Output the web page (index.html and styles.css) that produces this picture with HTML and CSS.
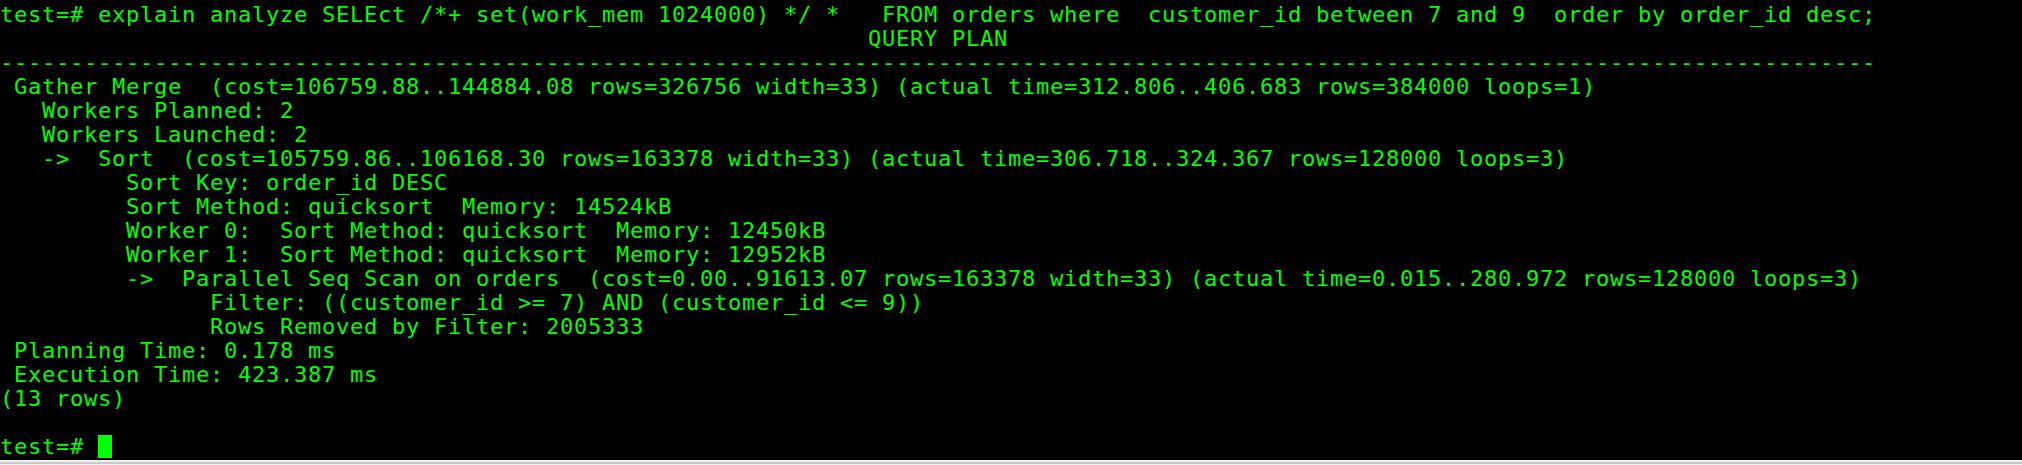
FILE: index.html
```html
<!DOCTYPE html>
<html>
<head>
<meta charset="utf-8">
<link rel="stylesheet" href="styles.css">
</head>
<body>
<div class="screen">
<div class="term"><pre class="out">test=# explain analyze SELEct /*+ set(work_mem 1024000) */ *   FROM orders where  customer_id between 7 and 9  order by order_id desc;
                                                              QUERY PLAN
--------------------------------------------------------------------------------------------------------------------------------------
 Gather Merge  (cost=106759.88..144884.08 rows=326756 width=33) (actual time=312.806..406.683 rows=384000 loops=1)
   Workers Planned: 2
   Workers Launched: 2
   -&gt;  Sort  (cost=105759.86..106168.30 rows=163378 width=33) (actual time=306.718..324.367 rows=128000 loops=3)
         Sort Key: order_id DESC
         Sort Method: quicksort  Memory: 14524kB
         Worker 0:  Sort Method: quicksort  Memory: 12450kB
         Worker 1:  Sort Method: quicksort  Memory: 12952kB
         -&gt;  Parallel Seq Scan on orders  (cost=0.00..91613.07 rows=163378 width=33) (actual time=0.015..280.972 rows=128000 loops=3)
               Filter: ((customer_id &gt;= 7) AND (customer_id &lt;= 9))
               Rows Removed by Filter: 2005333
 Planning Time: 0.178 ms
 Execution Time: 423.387 ms
(13 rows)

test=# <span class="cursor"> </span></pre></div>
<div class="statusbar"><div class="sb-line"></div></div>
</div>
</body>
</html>
```
FILE: styles.css
```css
html, body {
  margin: 0;
  padding: 0;
  background: #000;
}
.screen {
  width: 2022px;
  height: 465px;
  display: flex;
  flex-direction: column;
  background: #000;
  overflow: hidden;
}
.term {
  flex: 1;
  padding-top: 3px;
  background: #000;
}
.out {
  margin: 0;
  font-family: "DejaVu Sans Mono", monospace;
  font-size: 22px;
  letter-spacing: 0.755px;
  line-height: 24px;
  color: #00ff00;
  white-space: pre;
}
.cursor {
  display: inline-block;
  width: 14px;
  height: 23px;
  vertical-align: top;
  margin-top: 0;
  background: #00ff00;
  letter-spacing: 0;
}
.statusbar {
  height: 5px;
  background: #f0f0f0;
  display: flex;
  flex-direction: column;
  justify-content: flex-end;
}
.sb-line {
  height: 2px;
  margin-bottom: 1px;
  background: #c8c8c8;
}
```
